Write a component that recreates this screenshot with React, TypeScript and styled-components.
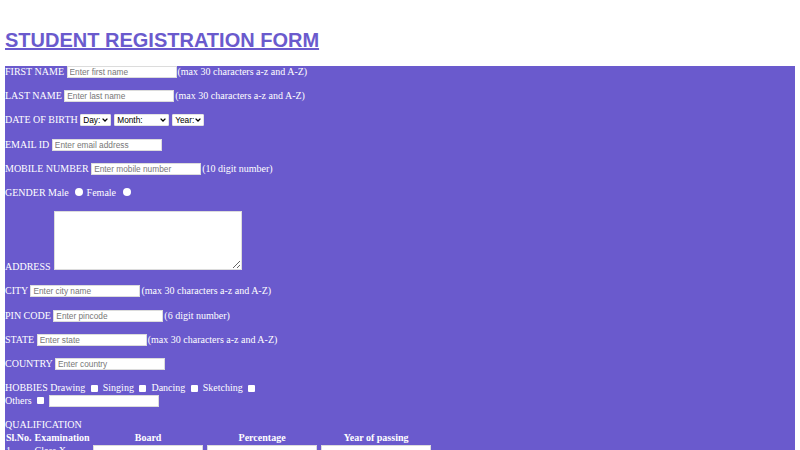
import styled, { createGlobalStyle } from "styled-components";

const GlobalStyle = createGlobalStyle`
    body {
        margin: 0;
        background: #ffffff;
        font-family: "Liberation Serif", "Times New Roman", serif;
    }
`;

const Page = styled.div`
    padding: 0 5px;
`;

const Title = styled.h1`
    margin: 29px 0 14px;
    font-family: "Liberation Sans", Arial, sans-serif;
    font-size: 20px;
    line-height: 23px;
    font-weight: bold;
    color: slateblue;
    text-decoration: underline;
    text-decoration-thickness: 2px;
`;

const Form = styled.form`
    background-color: slateblue;
    color: #ffffff;
    font-size: 10px;
    line-height: 12.6px;
    padding-bottom: 20px;
`;

const Row = styled.div<{ $gap?: number }>`
    margin-bottom: ${(p) => (p.$gap ?? 11.6)}px;
    white-space: nowrap;
`;

const TextInput = styled.input`
    box-sizing: border-box;
    width: ${(p) => (p.width ? `${p.width}px` : "110px")};
    height: 12px;
    margin: 0 1px 0 0;
    padding: 0 2px;
    border: 1px solid #dcdcdc;
    background: #ffffff;
    font-family: "Liberation Sans", Arial, sans-serif;
    font-size: 8.3px;
    color: #222;
    vertical-align: baseline;
    &::placeholder {
        color: #777;
    }
`;

const SelectWrap = styled.span`
    position: relative;
    display: inline-block;
    margin-right: 3px;
`;

const Select = styled.select<{ $w: number }>`
    appearance: none;
    box-sizing: border-box;
    width: ${(p) => p.$w}px;
    height: 12px;
    padding: 0 0 0 2px;
    border: 1px solid #e4e4e4;
    border-radius: 1px;
    background: #ffffff;
    font-family: "Liberation Sans", Arial, sans-serif;
    font-size: 8.3px;
    line-height: 10px;
    color: #000;
`;

const Chevron = styled.svg`
    position: absolute;
    right: 3px;
    top: 3.5px;
    width: 6px;
    height: 4px;
    pointer-events: none;
`;

const Radio = styled.input.attrs({ type: "radio" })`
    appearance: none;
    width: 8px;
    height: 8px;
    margin: 0 1px 0 4px;
    border-radius: 50%;
    background: #ffffff;
    vertical-align: -0.5px;
`;

const Check = styled.input.attrs({ type: "checkbox" })`
    appearance: none;
    width: 7px;
    height: 7px;
    margin: 0 5px 0 5.5px;
    background: #ffffff;
    border-radius: 1px;
    vertical-align: -0.5px;
`;

const Address = styled.textarea`
    box-sizing: border-box;
    width: 188px;
    height: 59px;
    margin: 0 0 0 3px;
    border: 1px solid #dcdcdc;
    background: #ffffff;
    vertical-align: baseline;
    resize: both;
`;

const Table = styled.table`
    border-spacing: 1.5px;
    margin-left: -1px;
    line-height: 12px;
`;

const Th = styled.th`
    padding: 0 1px;
    font-weight: bold;
    text-align: center;
`;

const Td = styled.td`
    padding: 0 1px;
`;

function Drop({ label, width }: { label: string; width: number }) {
    return (
        <SelectWrap>
            <Select $w={width} defaultValue="">
                <option value="">{label}</option>
            </Select>
            <Chevron viewBox="0 0 6 4">
                <path d="M0.6 0.6 L3 3 L5.4 0.6" fill="none" stroke="#000" strokeWidth="1.3" />
            </Chevron>
        </SelectWrap>
    );
}

const rules = "(max 30 characters a-z and A-Z)";

function App() {
    return (
        <Page>
            <GlobalStyle />
            <Title>STUDENT REGISTRATION FORM</Title>
            <Form>
                <Row>FIRST NAME <TextInput placeholder="Enter first name" />{rules}</Row>
                <Row>LAST NAME <TextInput placeholder="Enter last name" />{rules}</Row>
                <Row>
                    DATE OF BIRTH <Drop label="Day:" width={31} />
                    <Drop label="Month:" width={55} />
                    <Drop label="Year:" width={32} />
                </Row>
                <Row>EMAIL ID <TextInput placeholder="Enter email address" /></Row>
                <Row>MOBILE NUMBER <TextInput placeholder="Enter mobile number" />(10 digit number)</Row>
                <Row>
                    GENDER Male <Radio name="gender" /> Female <Radio name="gender" />
                </Row>
                <Row>ADDRESS<Address /></Row>
                <Row>CITY <TextInput placeholder="Enter city name" />{rules}</Row>
                <Row>PIN CODE <TextInput placeholder="Enter pincode" />(6 digit number)</Row>
                <Row>STATE <TextInput placeholder="Enter state" />{rules}</Row>
                <Row>COUNTRY <TextInput placeholder="Enter country" /></Row>
                <Row>
                    HOBBIES Drawing<Check />Singing<Check />Dancing<Check />Sketching<Check />
                    <br />
                    Others<Check /><TextInput />
                </Row>
                <Row $gap={0}>QUALIFICATION</Row>
                <Table>
                    <thead>
                        <tr>
                            <Th>Sl.No.</Th>
                            <Th>Examination</Th>
                            <Th>Board</Th>
                            <Th>Percentage</Th>
                            <Th>Year of passing</Th>
                        </tr>
                    </thead>
                    <tbody>
                        <tr>
                            <Td>1</Td>
                            <Td>Class X</Td>
                            <Td><TextInput /></Td>
                            <Td><TextInput /></Td>
                            <Td><TextInput /></Td>
                        </tr>
                        <tr>
                            <Td>2</Td>
                            <Td>Class XII</Td>
                            <Td><TextInput /></Td>
                            <Td><TextInput /></Td>
                            <Td><TextInput /></Td>
                        </tr>
                    </tbody>
                </Table>
            </Form>
        </Page>
    );
}

export default App;
